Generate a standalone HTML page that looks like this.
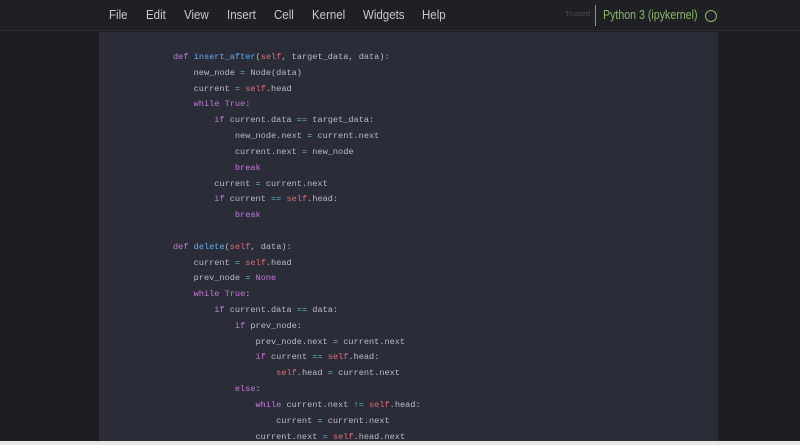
<!DOCTYPE html>
<html><head><meta charset="utf-8"><style>
*{margin:0;padding:0;box-sizing:border-box}
body{width:800px;height:445px;overflow:hidden;background:#1d1e21;font-family:"Liberation Sans",sans-serif;position:relative}
.hdr{position:absolute;left:0;top:0;width:800px;height:31px;background:#1f2023;border-bottom:1px solid #2c2d31}
.menu{position:absolute;top:8px;font-size:12.5px;color:#c8c9cc;transform-origin:left;transform:scaleX(0.92)}
.trusted{position:absolute;left:565px;top:9px;font-size:7.5px;color:#4a4d5a}
.sep{position:absolute;left:595px;top:5px;width:1px;height:21px;background:#8a9a6a}
.kern{position:absolute;left:603px;top:8px;font-size:12.5px;color:#8cb86a;transform-origin:left;transform:scaleX(0.85);white-space:nowrap}
.circ{position:absolute;left:705px;top:10px;width:12px;height:12px;border:1.2px solid #8cb86a;border-radius:50%}
.cell{position:absolute;left:99px;top:32px;width:619px;height:410px;background:#2a2c37}
pre{position:absolute;left:173px;top:50px;font-family:"Liberation Mono",monospace;font-size:8.6px;line-height:15.82px;color:#b8bcc6}
.k{color:#c678dd}.f{color:#61afef}.s{color:#e06c75}.o{color:#56b6c2}
.bot{position:absolute;left:0;top:441px;width:800px;height:4px;background:#e6e6e6}
</style></head><body>
<div class="hdr">
<span class="menu" style="left:109px">File</span>
<span class="menu" style="left:146px">Edit</span>
<span class="menu" style="left:184px">View</span>
<span class="menu" style="left:227px">Insert</span>
<span class="menu" style="left:274px">Cell</span>
<span class="menu" style="left:312px">Kernel</span>
<span class="menu" style="left:363px">Widgets</span>
<span class="menu" style="left:422px">Help</span>
<span class="trusted">Trusted</span>
<div class="sep"></div>
<span class="kern">Python 3 (ipykernel)</span>
<div class="circ"></div>
</div>
<div class="cell"></div>
<pre><span class="k">def</span> <span class="f">insert_after</span>(<span class="s">self</span>, target_data, data):
    new_node <span class="o">=</span> Node(data)
    current <span class="o">=</span> <span class="s">self</span>.head
    <span class="k">while</span> <span class="k">True</span>:
        <span class="k">if</span> current.data <span class="o">==</span> target_data:
            new_node.next <span class="o">=</span> current.next
            current.next <span class="o">=</span> new_node
            <span class="k">break</span>
        current <span class="o">=</span> current.next
        <span class="k">if</span> current <span class="o">==</span> <span class="s">self</span>.head:
            <span class="k">break</span>

<span class="k">def</span> <span class="f">delete</span>(<span class="s">self</span>, data):
    current <span class="o">=</span> <span class="s">self</span>.head
    prev_node <span class="o">=</span> <span class="k">None</span>
    <span class="k">while</span> <span class="k">True</span>:
        <span class="k">if</span> current.data <span class="o">==</span> data:
            <span class="k">if</span> prev_node:
                prev_node.next <span class="o">=</span> current.next
                <span class="k">if</span> current <span class="o">==</span> <span class="s">self</span>.head:
                    <span class="s">self</span>.head <span class="o">=</span> current.next
            <span class="k">else</span>:
                <span class="k">while</span> current.next <span class="o">!=</span> <span class="s">self</span>.head:
                    current <span class="o">=</span> current.next
                current.next <span class="o">=</span> <span class="s">self</span>.head.next</pre>
<div class="bot"></div>
</body></html>
